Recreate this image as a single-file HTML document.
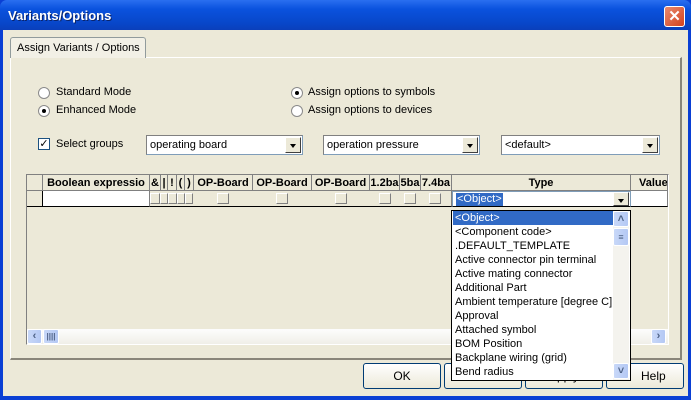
<!DOCTYPE html>
<html><head><style>
*{box-sizing:border-box;margin:0;padding:0}
body{width:691px;height:400px;overflow:hidden;font-family:"Liberation Sans",sans-serif;font-size:11px;color:#000;background:#0a3fd4;position:relative}
.a{position:absolute}
.win{left:3px;top:30px;width:685px;height:366px;background:#ece9d8}
.title{left:0;top:0;width:691px;height:30px;background:linear-gradient(#2a6ff0,#0a52de 30%,#0846c8 80%,#0a3fba);border-radius:7px 7px 0 0}
.tt{left:8px;top:8px;color:#fff;font-weight:bold;font-size:13px;text-shadow:1px 1px #0a246a}
.close{left:664px;top:6px;width:21px;height:21px;border:1px solid #fff;border-radius:3px;background:linear-gradient(135deg,#e88a6e,#d4421e);color:#fff;font-weight:bold;font-size:15px;text-align:center;line-height:19px}
.panel{left:10px;top:57px;width:672px;height:303px;border:1px solid #fff;border-right:2px solid #8a867a;border-bottom:2px solid #8a867a}
.tab{left:10px;top:37px;width:136px;height:21px;border:1px solid #919b9c;border-bottom:none;padding:4px 0 0 6px;border-radius:3px 3px 0 0;background:#f2f0e6}
.rad{width:12px;height:12px;border-radius:50%;border:1px solid #8a8a8a;background:#fff}
.rad.on::after{content:"";position:absolute;left:3px;top:3px;width:4px;height:4px;border-radius:50%;background:#000}
.cb{width:12px;height:12px;border:1px solid #1c5180;background:#fff;font-size:11px;line-height:10px;text-align:center}
.combo{height:20px;border:1px solid #7f9db9;border-top-color:#808080;border-left-color:#808080;background:#fff;padding:3px 3px}
.dd{position:absolute;right:1px;top:1px;width:16px;height:16px;background:#ece9d8;border:1px solid #fff;border-right-color:#404040;border-bottom-color:#404040}
.dd::after{content:"";position:absolute;left:4px;top:6px;border:3.5px solid transparent;border-top:4px solid #000}
.grid{left:26px;top:174px;width:643px;height:171px;background:#ece9d8;border:1px solid #808080;border-right-color:#fff;border-bottom-color:#fff}
.hc{top:175px;height:16px;border-right:1px solid #808080;border-bottom:1px solid #808080;font-weight:bold;text-align:center;line-height:16px;overflow:hidden;white-space:nowrap;background:#ece9d8}
.rc{top:191px;height:16px;border-right:1px solid #808080;border-bottom:1px solid #000;background:#fff}
.btn{width:12px;height:11px;top:193px;background:#ece9d8;border:1px solid #fff;border-right-color:#808080;border-bottom-color:#808080}
.pb{top:363px;width:78px;height:26px;border:1px solid #003c74;border-radius:3px;background:linear-gradient(#fff,#ece9d8);text-align:center;line-height:24px;font-size:12px}
.sb{background:linear-gradient(90deg,#c8d8f8,#b4c8f4);border:1px solid #fff;border-radius:2px;color:#4d6185;font-weight:bold;text-align:center}
.li{left:453px;width:160px;height:14px;line-height:14px;padding-left:2px;white-space:nowrap}
</style></head><body>
<div class="a title"></div>
<div class="a tt">Variants/Options</div>
<div class="a close">✕</div>
<div class="a win"></div>
<div class="a panel"></div>
<div class="a tab">Assign Variants / Options</div>

<div class="a rad" style="left:38px;top:87px"></div><div class="a" style="left:56px;top:86px">Standard Mode</div>
<div class="a rad on" style="left:38px;top:105px"></div><div class="a" style="left:56px;top:104px">Enhanced Mode</div>
<div class="a rad on" style="left:291px;top:87px"></div><div class="a" style="left:308px;top:86px">Assign options to symbols</div>
<div class="a rad" style="left:291px;top:105px"></div><div class="a" style="left:308px;top:104px">Assign options to devices</div>
<div class="a cb" style="left:38px;top:138px">✓</div><div class="a" style="left:56px;top:138px">Select groups</div>
<div class="a combo" style="left:146px;top:135px;width:157px">operating board<div class="dd"></div></div>
<div class="a combo" style="left:323px;top:135px;width:157px">operation pressure<div class="dd"></div></div>
<div class="a combo" style="left:501px;top:135px;width:159px">&lt;default&gt;<div class="dd"></div></div>

<div class="a grid"></div>
<div class="a hc" style="left:27px;width:16px"></div>
<div class="a hc" style="left:43px;width:107px">Boolean expressio</div>
<div class="a hc" style="left:150px;width:11px">&amp;</div>
<div class="a hc" style="left:161px;width:7px">|</div>
<div class="a hc" style="left:168px;width:9px">!</div>
<div class="a hc" style="left:177px;width:8px">(</div>
<div class="a hc" style="left:185px;width:9px">)</div>
<div class="a hc" style="left:194px;width:59px">OP-Board</div>
<div class="a hc" style="left:253px;width:59px">OP-Board</div>
<div class="a hc" style="left:312px;width:58px">OP-Board</div>
<div class="a hc" style="left:370px;width:30px">1.2ba</div>
<div class="a hc" style="left:400px;width:21px">5ba</div>
<div class="a hc" style="left:421px;width:31px">7.4ba</div>
<div class="a hc" style="left:452px;width:179px">Type</div>
<div class="a hc" style="left:631px;width:37px;text-align:left;padding-left:8px">Value</div>
<div class="a rc" style="left:27px;width:16px;background:#ece9d8;border-right-color:#000"></div>
<div class="a rc" style="left:43px;width:107px"></div>
<div class="a rc" style="left:150px;width:302px;background:#ece9d8"></div>
<div class="a btn" style="left:150px;width:10px"></div><div class="a btn" style="left:160px;width:8px"></div><div class="a btn" style="left:168px;width:9px"></div><div class="a btn" style="left:177px;width:8px"></div><div class="a btn" style="left:185px;width:8px"></div>
<div class="a btn" style="left:217px"></div><div class="a btn" style="left:276px"></div><div class="a btn" style="left:335px"></div><div class="a btn" style="left:379px"></div><div class="a btn" style="left:404px"></div><div class="a btn" style="left:429px"></div>
<div class="a rc" style="left:452px;width:179px;background:#fff;border:1px solid #7f9db9;border-bottom-color:#000"><span style="position:absolute;left:3px;top:1px;background:#316ac5;color:#fff;padding:0 1px;line-height:13px">&lt;Object&gt;</span><div class="dd" style="top:0;height:14px"></div></div>
<div class="a rc" style="left:631px;width:37px"></div>

<div class="a" style="left:27px;top:329px;width:641px;height:15px;background:linear-gradient(#fdfdfd,#f0efe8)"></div>
<div class="a sb" style="left:27px;top:329px;width:15px;height:15px;line-height:13px">‹</div>
<div class="a sb" style="left:43px;top:329px;width:16px;height:15px;font-size:8px;line-height:13px">||||</div>
<div class="a sb" style="left:651px;top:329px;width:15px;height:15px;line-height:13px">›</div>

<div class="a pb" style="left:363px">OK</div>
<div class="a pb" style="left:444px">Cancel</div>
<div class="a pb" style="left:525px">Apply</div>
<div class="a pb" style="left:606px">&nbsp;&nbsp;&nbsp;&nbsp;&nbsp;Help</div>

<div class="a" style="left:451px;top:210px;width:180px;height:171px;background:#fff;border:1px solid #000"></div>
<div class="a" style="left:613px;top:211px;width:16px;height:169px;background:#f4f3ee"></div>
<div class="a sb" style="left:613px;top:211px;width:16px;height:16px;line-height:14px">˄</div>
<div class="a sb" style="left:613px;top:228px;width:16px;height:18px;font-size:9px;line-height:16px">≡</div>
<div class="a sb" style="left:613px;top:363px;width:16px;height:16px;line-height:14px">˅</div>
<div class="a li" style="top:211px;background:#316ac5;color:#fff">&lt;Object&gt;</div>
<div class="a li" style="top:225px">&lt;Component code&gt;</div>
<div class="a li" style="top:239px">.DEFAULT_TEMPLATE</div>
<div class="a li" style="top:253px">Active connector pin terminal</div>
<div class="a li" style="top:267px">Active mating connector</div>
<div class="a li" style="top:281px">Additional Part</div>
<div class="a li" style="top:295px">Ambient temperature [degree C]</div>
<div class="a li" style="top:309px">Approval</div>
<div class="a li" style="top:323px">Attached symbol</div>
<div class="a li" style="top:337px">BOM Position</div>
<div class="a li" style="top:351px">Backplane wiring (grid)</div>
<div class="a li" style="top:365px">Bend radius</div>
</body></html>
